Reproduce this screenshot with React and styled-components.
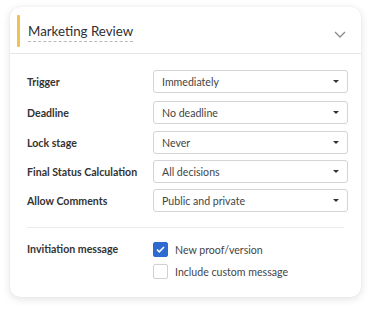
import React from "react";
import styled, { createGlobalStyle } from "styled-components";

const GlobalStyle = createGlobalStyle`
  body {
    margin: 0;
    background: #fff;
    font-family: Lato, "Open Sans", sans-serif;
  }
`;

const Page = styled.div`
  padding: 7px 12px 15px 10px;
`;

const Card = styled.div`
  width: 351px;
  height: 290px;
  box-sizing: border-box;
  background: #fff;
  border-radius: 10px;
  box-shadow: 0 2px 8px rgba(0, 0, 0, 0.12), 0 0 1px rgba(0, 0, 0, 0.08);
  overflow: hidden;
`;

const Header = styled.div`
  height: 47px;
  display: flex;
  align-items: flex-start;
  padding: 8px 15px 0 7px;
  box-sizing: border-box;
  border-bottom: 1px solid #e6e6e6;
`;

const Accent = styled.div`
  width: 3px;
  height: 32px;
  background: #f0c24f;
  border-radius: 1px;
  margin-right: 8px;
`;

const Title = styled.h2`
  margin: 8px 0 0;
  font-size: 13.3px;
  font-weight: 400;
  color: #2f2f33;
  border-bottom: 1px dashed #b8b8b8;
  line-height: 17px;
  padding-bottom: 1px;
`;

const Chevron = styled.svg`
  margin-left: auto;
  margin-top: 16px;
`;

const Body = styled.div`
  padding: 16px 13px 0 17px;
`;

const Row = styled.div`
  display: flex;
  align-items: center;
  height: 23px;
  margin-bottom: ${(p) => p.gap}px;
`;

const Label = styled.div`
  width: 126px;
  font-size: 10.6px;
  font-weight: 700;
  color: #333;
`;

const Select = styled.div`
  flex: 1;
  height: 23px;
  box-sizing: border-box;
  border: 1px solid #d4d4d4;
  border-radius: 3px;
  display: flex;
  align-items: center;
  padding: 0 8px;
  font-size: 10.6px;
  color: #444;
`;

const Caret = styled.span`
  margin-left: auto;
  width: 0;
  height: 0;
  border-left: 3px solid transparent;
  border-right: 3px solid transparent;
  border-top: 3px solid #333;
`;

const Divider = styled.div`
  height: 1px;
  background: #ececec;
  margin: 15px 4px 14px 0;
`;

const InviteRow = styled.div`
  display: flex;
`;

const InviteLabel = styled(Label)`
  padding-top: 1px;
`;

const Options = styled.div`
  display: flex;
  flex-direction: column;
  gap: 7px;
`;

const Option = styled.label`
  display: flex;
  align-items: center;
  gap: 7px;
  font-size: 10.6px;
  color: #444;
`;

const Box = styled.span`
  width: 15px;
  height: 15px;
  box-sizing: border-box;
  border-radius: 2px;
  display: flex;
  align-items: center;
  justify-content: center;
  background: ${(p) => (p.checked ? "#2d6bd0" : "#fff")};
  border: 1px solid ${(p) => (p.checked ? "#2d6bd0" : "#d0d0d0")};
`;

const rows = [
  ["Trigger", "Immediately", 8],
  ["Deadline", "No deadline", 7],
  ["Lock stage", "Never", 6],
  ["Final Status Calculation", "All decisions", 6],
  ["Allow Comments", "Public and private", 0],
];

export default function App() {
  return (
    <Page>
      <GlobalStyle />
      <Card>
        <Header>
          <Accent />
          <Title>Marketing Review</Title>
          <Chevron width="12" height="7" viewBox="0 0 12 7">
            <path d="M1 1l5 5 5-5" fill="none" stroke="#8a8a8a" strokeWidth="1.3" />
          </Chevron>
        </Header>
        <Body>
          {rows.map(([label, value, gap]) => (
            <Row key={label} gap={gap}>
              <Label>{label}</Label>
              <Select>
                {value}
                <Caret />
              </Select>
            </Row>
          ))}
          <Divider />
          <InviteRow>
            <InviteLabel>Invitiation message</InviteLabel>
            <Options>
              <Option>
                <Box checked>
                  <svg width="9" height="7" viewBox="0 0 9 7">
                    <path d="M1 3.5l2.3 2.3L8 1" fill="none" stroke="#fff" strokeWidth="1.6" />
                  </svg>
                </Box>
                New proof/version
              </Option>
              <Option>
                <Box />
                Include custom message
              </Option>
            </Options>
          </InviteRow>
        </Body>
      </Card>
    </Page>
  );
}
